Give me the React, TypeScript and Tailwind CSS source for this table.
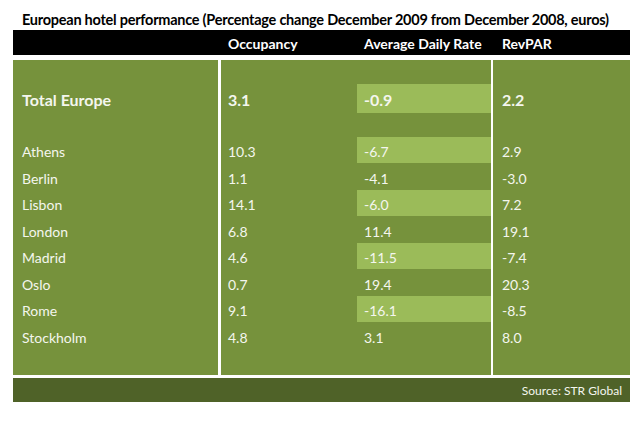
const rows = [
  { city: "Athens", occ: "10.3", adr: "-6.7", rev: "2.9", hi: true, h: "h-[26px]" },
  { city: "Berlin", occ: "1.1", adr: "-4.1", rev: "-3.0", hi: false, h: "h-[27px]" },
  { city: "Lisbon", occ: "14.1", adr: "-6.0", rev: "7.2", hi: true, h: "h-[26px]" },
  { city: "London", occ: "6.8", adr: "11.4", rev: "19.1", hi: false, h: "h-[27px]" },
  { city: "Madrid", occ: "4.6", adr: "-11.5", rev: "-7.4", hi: true, h: "h-[26px]" },
  { city: "Oslo", occ: "0.7", adr: "19.4", rev: "20.3", hi: false, h: "h-[27px]" },
  { city: "Rome", occ: "9.1", adr: "-16.1", rev: "-8.5", hi: true, h: "h-[26px]" },
  { city: "Stockholm", occ: "4.8", adr: "3.1", rev: "8.0", hi: false, h: "h-[27px]" },
];

type Col = "city" | "occ" | "adr" | "rev";

function Column({ field, total, width, pad, highlight }: {
  field: Col;
  total: string;
  width: string;
  pad: string;
  highlight?: boolean;
}) {
  return (
    <div className={`${width} flex flex-col pt-[24px]`}>
      <div
        className={`h-[29px] flex items-center pt-[3px] ${pad} text-[16px] font-bold ${
          highlight ? "bg-[#9bbb59]" : ""
        }`}
      >
        {total}
      </div>
      <div className="h-[24px]" />
      {rows.map((r) => (
        <div
          key={r.city}
          className={`${r.h} flex items-center pt-[3px] ${pad} ${
            highlight && r.hi ? "bg-[#9bbb59]" : ""
          }`}
        >
          {r[field]}
        </div>
      ))}
    </div>
  );
}

export default function App() {
  return (
    <div
      className="w-[640px] h-[425px] bg-white text-[#f4f6ee] text-[14px]"
      style={{ fontFamily: "Lato, 'Open Sans', sans-serif" }}
    >
      <div className="h-[30px] pl-[22px] pt-[11px] text-[14.5px] font-bold text-black leading-[18px] tracking-[-0.25px]">
        European hotel performance (Percentage change December 2009 from December 2008, euros)
      </div>

      <div className="ml-[13px] w-[617px]">
        {/* header */}
        <div className="h-[25px] bg-black flex items-center pt-[2px] text-[14px] font-bold text-white">
          <div className="w-[208px]" />
          <div className="w-[136px] pl-[7px]">Occupancy</div>
          <div className="w-[136px] pl-[7px]">Average Daily Rate</div>
          <div className="pl-[9px]">RevPAR</div>
        </div>

        {/* body */}
        <div className="mt-[5px] h-[315px] flex bg-white">
          <div className="w-[205px] bg-[#76923c] flex">
            <Column field="city" total="Total Europe" width="w-[205px]" pad="pl-[9px]" />
          </div>
          <div className="ml-[3px] w-[270px] bg-[#76923c] flex">
            <Column field="occ" total="3.1" width="w-[136px]" pad="pl-[7px]" />
            <Column field="adr" total="-0.9" width="w-[134px]" pad="pl-[7px]" highlight />
          </div>
          <div className="ml-[2px] w-[137px] bg-[#76923c] flex">
            <Column field="rev" total="2.2" width="w-[137px]" pad="pl-[9px]" />
          </div>
        </div>

        {/* footer */}
        <div className="mt-[3px] h-[24px] bg-[#4f6228] flex items-center justify-end pr-[8px] pt-[2px] text-[12px]">
          Source: STR Global
        </div>
      </div>
    </div>
  );
}
